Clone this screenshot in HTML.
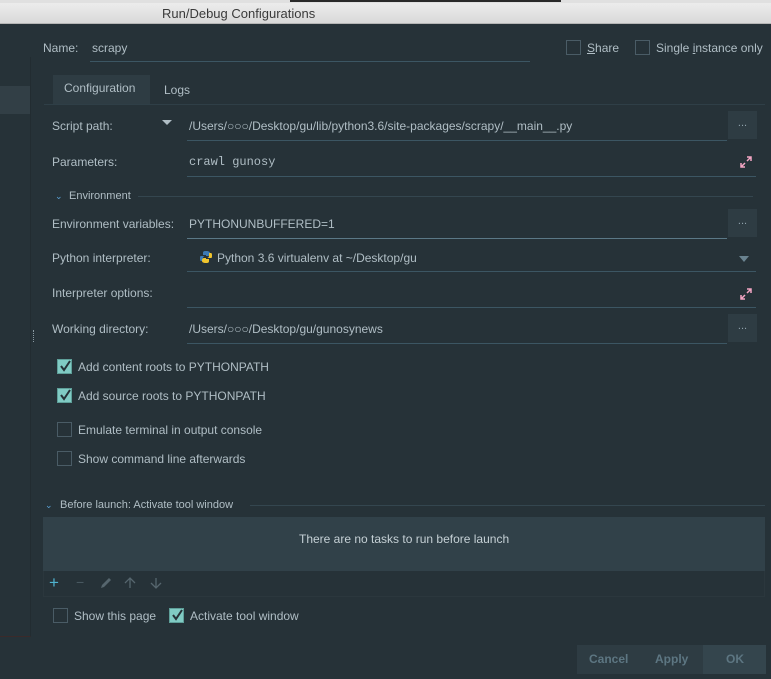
<!DOCTYPE html><html><head><style>
*{margin:0;padding:0;box-sizing:border-box}
body{width:771px;height:679px;background:#263238;font-family:"Liberation Sans",sans-serif;font-size:12px;color:#b0bec5;position:relative;overflow:hidden}
.a{position:absolute;white-space:nowrap}
.ul{position:absolute;height:1px;background:#3c5663}
.btn{position:absolute;width:29px;height:28px;background:#2e3c43;color:#8fa1ab;text-align:center;line-height:24px;font-size:11px}
.cb{position:absolute;width:15px;height:15px;border:1px solid #4a5c66}
.ck{position:absolute;width:15px;height:15px;background:#80cbc4;border:1px solid #5e9f99}
.ck svg{position:absolute;left:1px;top:0}
.ex{position:absolute}
</style></head><body>
<div class="a" style="left:0;top:0;width:771px;height:3px;background:#e0e0e0"></div>
<div class="a" style="left:290px;top:0;width:271px;height:2px;background:#2a2a2a"></div>
<div class="a" style="left:0;top:3px;width:771px;height:21px;background:linear-gradient(#ececec,#d9d9d9);border-bottom:1px solid #b5b5b5"></div>
<div class="a" style="left:162px;top:6px;font-size:13px;color:#3a3a3a">Run/Debug Configurations</div>
<div class="a" style="left:0;top:57px;width:31px;height:580px;border-right:1px solid #222c31;border-bottom:1px solid #3b2a2a"></div>
<div class="a" style="left:0;top:86px;width:30px;height:28px;background:#323f46"></div>
<div class="a" style="left:33px;top:330px;width:2px;height:12px;border-left:1px dotted #8a9aa2"></div>

<div class="a" style="left:43px;top:41px">Name:</div>
<div class="a" style="left:92px;top:41px">scrapy</div>
<div class="ul" style="left:90px;top:61px;width:440px"></div>
<div class="cb" style="left:566px;top:40px"></div><div class="a" style="left:587px;top:41px"><u>S</u>hare</div>
<div class="cb" style="left:635px;top:40px"></div><div class="a" style="left:656px;top:41px">Single <u>i</u>nstance only</div>

<div class="a" style="left:53px;top:75px;width:97px;height:30px;background:#2e3c43"></div>
<div class="a" style="left:64px;top:81px">Configuration</div>
<div class="a" style="left:164px;top:83px">Logs</div>
<div class="ul" style="left:44px;top:104px;width:721px;background:#2f3f47"></div>

<div class="a" style="left:52px;top:119px">Script path:</div>
<div class="a" style="left:162px;top:120px;width:0;height:0;border-left:5px solid transparent;border-right:5px solid transparent;border-top:5px solid #b0bec5"></div>
<div class="a" style="left:189px;top:119px">/Users/○○○/Desktop/gu/lib/python3.6/site-packages/scrapy/__main__.py</div>
<div class="ul" style="left:187px;top:140px;width:540px"></div>
<div class="btn" style="left:728px;top:111px">...</div>

<div class="a" style="left:52px;top:155px">Parameters:</div>
<div class="a" style="left:189px;top:155px;font-family:'Liberation Mono',monospace">crawl gunosy</div>
<div class="ul" style="left:187px;top:176px;width:569px"></div>
<svg class="ex" style="left:739px;top:155px" width="14" height="14"><path d="M8 2h4v4M12 2L8 6M2 8v4h4M2 12l4-4" stroke="#f4a6c4" stroke-width="1.5" fill="none"/></svg>

<div class="a" style="left:55px;top:191px;font-size:9px;color:#5aa3d8">⌄</div>
<div class="a" style="left:69px;top:190px;font-size:11px">Environment</div>
<div class="ul" style="left:138px;top:196px;width:615px;background:#34464f"></div>

<div class="a" style="left:52px;top:217px">Environment variables:</div>
<div class="a" style="left:189px;top:217px">PYTHONUNBUFFERED=1</div>
<div class="ul" style="left:187px;top:238px;width:540px;background:#5b7886"></div>
<div class="btn" style="left:728px;top:209px">...</div>

<div class="a" style="left:52px;top:251px">Python interpreter:</div>
<svg class="ex" style="left:199px;top:250px" width="14" height="14"><path d="M7 1c-3 0-3 1-3 2v2h3v1H2c-1 0-1 1-1 3s1 2 1 2h2V8c0-1 1-2 2-2h3c1 0 2-1 2-2V3c0-1-1-2-4-2z" fill="#3d7ab5"/><path d="M7 13c3 0 3-1 3-2V9H7V8h5c1 0 1-1 1-3s-1-2-1-2h-2v3c0 1-1 2-2 2H5c-1 0-2 1-2 2v1c0 1 1 2 4 2z" fill="#f0c52e"/></svg>
<div class="a" style="left:217px;top:251px">Python 3.6 virtualenv at ~/Desktop/gu</div>
<div class="a" style="left:739px;top:256px;width:0;height:0;border-left:5px solid transparent;border-right:5px solid transparent;border-top:6px solid #6a8390"></div>
<div class="ul" style="left:187px;top:271px;width:569px"></div>

<div class="a" style="left:52px;top:286px">Interpreter options:</div>
<div class="ul" style="left:187px;top:307px;width:569px"></div>
<svg class="ex" style="left:739px;top:287px" width="14" height="14"><path d="M8 2h4v4M12 2L8 6M2 8v4h4M2 12l4-4" stroke="#f4a6c4" stroke-width="1.5" fill="none"/></svg>

<div class="a" style="left:52px;top:322px">Working directory:</div>
<div class="a" style="left:189px;top:322px">/Users/○○○/Desktop/gu/gunosynews</div>
<div class="ul" style="left:187px;top:343px;width:540px"></div>
<div class="btn" style="left:728px;top:314px">...</div>

<div class="ck" style="left:57px;top:359px"><svg width="13" height="13"><path d="M2 6l3 4 6-9" stroke="#263238" stroke-width="2" fill="none"/></svg></div><div class="a" style="left:78px;top:360px">Add content roots to PYTHONPATH</div>
<div class="ck" style="left:57px;top:388px"><svg width="13" height="13"><path d="M2 6l3 4 6-9" stroke="#263238" stroke-width="2" fill="none"/></svg></div><div class="a" style="left:78px;top:389px">Add source roots to PYTHONPATH</div>
<div class="cb" style="left:57px;top:422px"></div><div class="a" style="left:78px;top:423px">Emulate terminal in output console</div>
<div class="cb" style="left:57px;top:451px"></div><div class="a" style="left:78px;top:452px">Show command line afterwards</div>

<div class="a" style="left:45px;top:500px;font-size:9px;color:#5aa3d8">⌄</div>
<div class="a" style="left:60px;top:499px;font-size:11px">Before launch: Activate tool window</div>
<div class="ul" style="left:250px;top:505px;width:515px;background:#34464f"></div>
<div class="a" style="left:43px;top:517px;width:722px;height:54px;background:#314149"></div>
<div class="a" style="left:299px;top:532px;color:#c5d0d5">There are no tasks to run before launch</div>
<div class="a" style="left:43px;top:571px;width:722px;height:26px;border:1px solid #2b373d;border-top:none"></div>
<div class="a" style="left:49px;top:573px;font-size:17px;color:#4fb3cf">+</div>
<div class="a" style="left:76px;top:574px;font-size:14px;color:#4a5a62">−</div>
<svg class="ex" style="left:99px;top:576px" width="14" height="14"><path d="M2 12l1-3 7-7 2 2-7 7z" fill="#56666e"/></svg>
<svg class="ex" style="left:124px;top:577px" width="12" height="12"><path d="M6 11V1M1 6l5-5 5 5" stroke="#56666e" stroke-width="1.3" fill="none"/></svg>
<svg class="ex" style="left:150px;top:577px" width="12" height="12"><path d="M6 1v10M1 6l5 5 5-5" stroke="#56666e" stroke-width="1.3" fill="none"/></svg>

<div class="cb" style="left:53px;top:608px"></div><div class="a" style="left:74px;top:609px">Show this page</div>
<div class="ck" style="left:169px;top:608px"><svg width="13" height="13"><path d="M2 6l3 4 6-9" stroke="#263238" stroke-width="2" fill="none"/></svg></div><div class="a" style="left:190px;top:609px">Activate tool window</div>

<div class="a" style="left:577px;top:645px;width:126px;height:29px;background:#2e3c43"></div>
<div class="a" style="left:703px;top:645px;width:63px;height:29px;background:#34454d"></div>
<div class="a" style="left:589px;top:652px;font-weight:bold;color:#5d7682">Cancel</div>
<div class="a" style="left:655px;top:652px;font-weight:bold;color:#5d7682">Apply</div>
<div class="a" style="left:726px;top:652px;font-weight:bold;color:#5d7682">OK</div>
</body></html>
